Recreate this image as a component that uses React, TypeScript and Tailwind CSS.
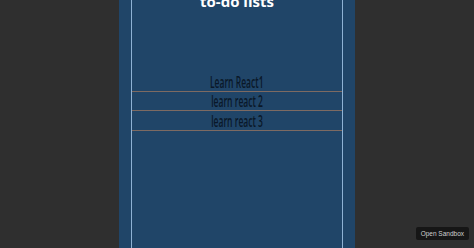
export default function App() {
  const todos = [
    { text: 'Learn React1', h: 'h-[20px]' },
    { text: 'learn react 2', h: 'h-[19px]' },
    { text: 'learn react 3', h: 'h-[20px]' },
  ]

  return (
    <div className="relative h-[248px] w-[474px] overflow-hidden bg-[#2f2f2f]">
      {/* Panel */}
      <div className="mx-auto flex h-full w-[236px] justify-center bg-[#204568]">
        <div className="flex h-full w-[212px] flex-col border-x border-[#8fb2d4]">
          <h1
            className="-mt-[9px] h-[20px] text-center text-[15px] font-bold leading-[20px] text-white"
            style={{ fontFamily: '"Open Sans", "Liberation Sans", sans-serif' }}
          >
            to-do lists
          </h1>
          <ul className="mt-[61px] flex flex-col">
            {todos.map((t) => (
              <li
                key={t.text}
                className={`flex ${t.h} items-center justify-center border-b border-[#7d6a62] text-[#0a1828]`}
              >
                <span
                  className="inline-block scale-x-[0.55] text-[15.5px] font-semibold leading-[16px]"
                  style={{ fontFamily: '"Open Sans", "Liberation Sans", sans-serif' }}
                >
                  {t.text}
                </span>
              </li>
            ))}
          </ul>
        </div>
      </div>

      {/* Open Sandbox */}
      <div
        className="absolute bottom-[8px] right-[5px] rounded-[2px] bg-[#161616] px-[5px] py-[3px] text-[6.5px] leading-[7px] text-[#d0d0d0]"
        style={{ fontFamily: '"Liberation Sans", sans-serif' }}
      >
        Open Sandbox
      </div>
    </div>
  )
}
